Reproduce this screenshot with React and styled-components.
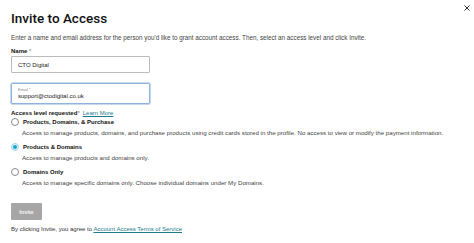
import styled, { createGlobalStyle } from "styled-components";

const GlobalStyle = createGlobalStyle`
  html, body {
    margin: 0;
    padding: 0;
    background: #ffffff;
    font-family: "Liberation Sans", Arial, sans-serif;
    color: #2b2b2b;
    overflow: hidden;
  }
`;

const Modal = styled.div`
  position: relative;
  box-sizing: border-box;
  padding: 8px 11px 0 11px;
  display: flex;
  flex-direction: column;
`;

const Close = styled.div`
  position: fixed;
  top: 3px;
  right: 2px;
  width: 10px;
  height: 10px;
  z-index: 10;
  svg {
    display: block;
  }
`;

const Title = styled.h1`
  margin: 0;
  font-family: Roboto, "Liberation Sans", sans-serif;
  font-size: 13.5px;
  line-height: 20px;
  font-weight: 500;
  color: #111111;
`;

const Intro = styled.p`
  margin: 6px 0 0 0;
  font-size: 6.3px;
  line-height: 8px;
  color: #444444;
`;

const Label = styled.div`
  font-size: 6px;
  line-height: 8px;
  font-weight: 700;
  color: #111111;
  margin-top: ${(p) => p.$top || 0}px;
  span {
    font-weight: 400;
    color: #777;
  }
`;

const Field = styled.div`
  box-sizing: border-box;
  width: 139px;
  height: ${(p) => (p.$floating ? 21 : 17)}px;
  margin-top: ${(p) => p.$top || 0}px;
  border: 1px solid ${(p) => (p.$focus ? "#8fb3dc" : "#bcbcbc")};
  box-shadow: ${(p) => (p.$focus ? "0 0 0 0.5px #8fb3dc" : "none")};
  border-radius: 1px;
  padding: 0 6px;
  display: flex;
  flex-direction: column;
  justify-content: center;
`;

const FloatLabel = styled.div`
  font-size: 4px;
  line-height: 5px;
  color: #8a8a8a;
`;

const Value = styled.div`
  font-size: 6px;
  line-height: 8px;
  color: #222222;
`;

const LinkText = styled.a`
  color: #1b7b8c;
  text-decoration: underline;
  font-weight: 400;
  margin-left: ${(p) => p.$gap || 0}px;
`;

const Option = styled.div`
  margin-top: ${(p) => p.$top}px;
`;

const OptionHead = styled.div`
  display: flex;
  align-items: center;
  gap: 4px;
  font-size: 6px;
  line-height: 8px;
  font-weight: 700;
  color: #111111;
`;

const Radio = styled.span`
  box-sizing: border-box;
  width: 8px;
  height: 8px;
  border-radius: 50%;
  border: 1px solid ${(p) => (p.$checked ? "#9fd5ea" : "#8a8a8a")};
  background: ${(p) => (p.$checked ? "#dff1f8" : "#ffffff")};
  display: flex;
  align-items: center;
  justify-content: center;
  &::after {
    content: "";
    display: ${(p) => (p.$checked ? "block" : "none")};
    width: 4px;
    height: 4px;
    border-radius: 50%;
    background: #1ba3cf;
  }
`;

const OptionDesc = styled.div`
  margin: 3px 0 0 11px;
  font-size: 6.15px;
  line-height: 8px;
  color: #444444;
`;

const InviteButton = styled.button`
  margin-top: 16px;
  width: 31px;
  height: 17px;
  padding: 0;
  border: none;
  border-radius: 1px;
  background: #a6a6a6;
  color: #f4f4f4;
  font-family: "Liberation Sans", Arial, sans-serif;
  font-size: 5.5px;
  font-weight: 700;
`;

const Footer = styled.div`
  margin-top: 5px;
  font-size: 6px;
  line-height: 8px;
  color: #333333;
`;

const options = [
  {
    title: "Products, Domains, & Purchase",
    desc: "Access to manage products, domains, and purchase products using credit cards stored in the profile. No access to view or modify the payment information.",
    top: 1,
  },
  {
    title: "Products & Domains",
    desc: "Access to manage products and domains only.",
    top: 6,
    checked: true,
  },
  {
    title: "Domains Only",
    desc: "Access to manage specific domains only. Choose individual domains under My Domains.",
    top: 6,
  },
];

export default function App() {
  return (
    <>
      <GlobalStyle />
      <Modal>
        <Close aria-label="Close">
          <svg width="10" height="10" viewBox="0 0 10 10">
            <line x1="2.5" y1="2.5" x2="7.5" y2="7.5" stroke="#333333" strokeWidth="1" />
            <line x1="7.5" y1="2.5" x2="2.5" y2="7.5" stroke="#333333" strokeWidth="1" />
          </svg>
        </Close>
        <Title>Invite to Access</Title>
        <Intro>
          Enter a name and email address for the person you'd like to grant account access. Then, select an access level and click Invite.
        </Intro>
        <Label $top={5}>
          Name <span>*</span>
        </Label>
        <Field $top={1}>
          <Value>CTO Digital</Value>
        </Field>
        <Field $top={10} $floating $focus>
          <FloatLabel>Email *</FloatLabel>
          <Value>support@ctodigital.co.uk</Value>
        </Field>
        <Label $top={5}>
          Access level requested<span>*</span>
          <LinkText href="#" $gap={3}>Learn More</LinkText>
        </Label>
        {options.map((o) => (
          <Option key={o.title} $top={o.top}>
            <OptionHead>
              <Radio $checked={o.checked} />
              {o.title}
            </OptionHead>
            <OptionDesc>{o.desc}</OptionDesc>
          </Option>
        ))}
        <InviteButton>Invite</InviteButton>
        <Footer>
          By clicking Invite, you agree to <LinkText href="#">Account Access Terms of Service</LinkText>
        </Footer>
      </Modal>
    </>
  );
}
